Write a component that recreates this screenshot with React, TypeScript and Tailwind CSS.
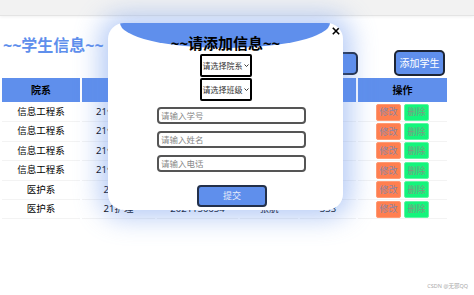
import React from "react"

const cols = "grid grid-cols-[78px_73px_81px_58px_56px_89px] gap-x-[2px]"

const rows = [
  ["信息工程系", "21信息1班", "2021150601", "李明", "331"],
  ["信息工程系", "21信息1班", "2021150602", "王芳", "332"],
  ["信息工程系", "21信息2班", "2021150603", "赵强", "333"],
  ["信息工程系", "21信息2班", "2021150604", "陈静", "334"],
  ["医护系", "21护理", "2021150653", "刘洋", "335"],
  ["医护系", "21护理", "2021150654", "张航", "333"],
]

function FakeSelect({ label }: { label: string }) {
  return (
    <div className="w-[52px] h-[23px] border-2 border-black rounded-[2px] flex items-center pl-[1px] gap-[1px] text-[8px] text-[#333] bg-white">
      <span className="whitespace-nowrap">{label}</span>
      <svg viewBox="0 0 10 10" className="w-[5px] h-[5px] shrink-0">
        <path d="M1 3l4 4 4-4" fill="none" stroke="#222" strokeWidth="1.8" />
      </svg>
    </div>
  )
}

function Field({ placeholder }: { placeholder: string }) {
  return (
    <input
      placeholder={placeholder}
      className="w-[149px] h-[17px] border-2 border-[#555] rounded-[4px] pl-[2px] text-[8.5px] outline-none placeholder:text-[#888] bg-white"
    />
  )
}

export default function App() {
  return (
    <div className="relative w-[474px] h-[295px] overflow-hidden bg-white text-black font-['Noto_Sans','Noto_Sans_CJK_SC',sans-serif]">
      <div className="h-[16px] bg-[#f2f2f2] border-b border-[#e4e4e4] shadow-[0_1px_3px_rgba(0,0,0,0.06)]" />

      {/* title row */}
      <div className="flex h-[62px] pl-[3px] pr-[29px]">
        <h1 className="pt-[19px] text-[16px] leading-[20px] font-bold text-[#5f8fec] whitespace-nowrap">~~学生信息~~</h1>
        <div className="flex-1" />
        <button className="mt-[36px] w-[58px] h-[23px] rounded-[5px] border-2 border-[#1d2535] bg-[#5f8fec]" />
        <button className="ml-[36px] mt-[34px] w-[51px] h-[26px] rounded-[5px] border-2 border-[#1d2535] bg-[#5f8fec] text-[10px] text-white">
          添加学生
        </button>
      </div>

      {/* table */}
      <div className="ml-[2px] w-[445px]">
        <div className={`${cols} h-[24px] text-[10px] font-bold`}>
          {["院系", "班级", "学号", "姓名", "电话", "操作"].map((h) => (
            <div key={h} className="bg-[#5f8fec] flex items-center justify-center">{h}</div>
          ))}
        </div>
        <div className="mt-[1px]">
          {rows.map((r, i) => (
            <div key={i} className={`${cols} h-[19.4px] text-[9.5px]`}>
              {r.map((c, j) => (
                <div key={j} className="flex items-center justify-center border-b border-[#f3f3f3] whitespace-nowrap">{c}</div>
              ))}
              <div className="flex items-center justify-center gap-[3px] border-b border-[#f3f3f3]">
                <button className="w-[25px] h-[17px] rounded-[2px] bg-[#ff7f50] border border-[#ff9a74] text-[9px] text-[#8a86a6]">修改</button>
                <button className="w-[25px] h-[17px] rounded-[2px] bg-[#14f57c] border border-[#5cf7a3] text-[9px] text-[#7e9a82]">删除</button>
              </div>
            </div>
          ))}
        </div>
      </div>

      {/* modal */}
      <div className="absolute left-[108px] top-[23px] w-[235px] h-[187px] rounded-[16px] bg-white shadow-[0_0_26px_8px_rgba(95,143,236,0.45)] overflow-hidden flex flex-col items-center">
        <div className="absolute left-[12px] -top-[25px] w-[210px] h-[50px] rounded-[50%] bg-[#5f8fec]" />
        <svg viewBox="0 0 10 10" className="absolute right-[3px] top-[4px] w-[8px] h-[8px]">
          <path d="M1 1l8 8M9 1l-8 8" stroke="#000" strokeWidth="2" />
        </svg>
        <h2 className="relative mt-[11px] text-[15px] leading-[18px] font-bold whitespace-nowrap">~~请添加信息~~</h2>
        <div className="mt-[2px]">
          <FakeSelect label="请选择院系" />
        </div>
        <div className="mt-[1px]">
          <FakeSelect label="请选择班级" />
        </div>
        <div className="mt-[6px] ml-[12px] flex flex-col gap-[7px]">
          <Field placeholder="请输入学号" />
          <Field placeholder="请输入姓名" />
          <Field placeholder="请输入电话" />
        </div>
        <button className="mt-[13px] ml-[13px] w-[70px] h-[22px] rounded-[4px] border-2 border-[#23304a] bg-[#5f8fec] text-[9px] text-[#e6ecfa]">
          提交
        </button>
      </div>

      <span className="absolute right-[6px] bottom-[5px] text-[5.5px] text-[#aaa]">CSDN @无邪QQ</span>
    </div>
  )
}
